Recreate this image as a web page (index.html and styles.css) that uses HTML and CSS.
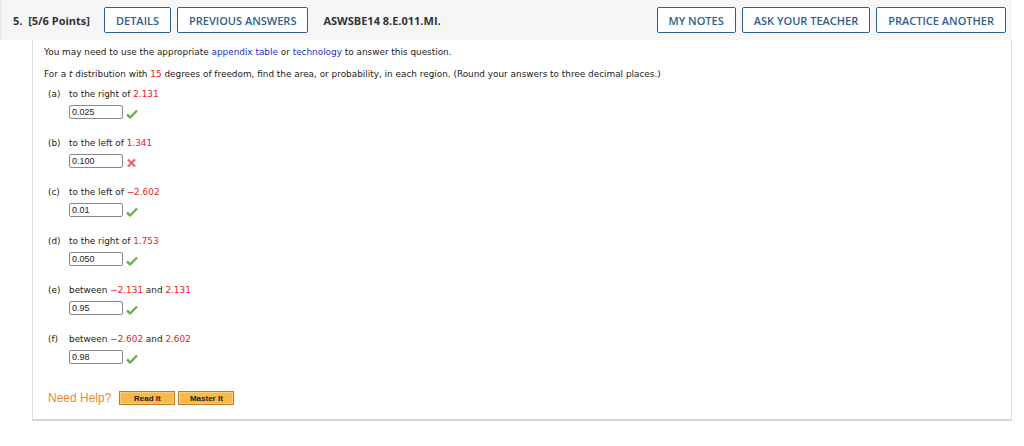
FILE: index.html
```html
<!DOCTYPE html>
<html>
<head>
<meta charset="utf-8">
<link rel="stylesheet" href="styles.css">
</head>
<body>
<div class="question">
  <div class="header">
    <span class="qnum">5.&nbsp; [5/6 Points]</span>
    <span class="btn">DETAILS</span>
    <span class="btn">PREVIOUS ANSWERS</span>
    <span class="qid">ASWSBE14 8.E.011.MI.</span>
    <span class="spacer"></span>
    <span class="btn">MY NOTES</span>
    <span class="btn">ASK YOUR TEACHER</span>
    <span class="btn">PRACTICE ANOTHER</span>
  </div>
  <div class="body">
    <p class="intro">You may need to use the appropriate <a class="lnk">appendix table</a> or <a class="lnk">technology</a> to answer this question.</p>
    <p class="intro2">For a <i>t</i> distribution with <span class="red">15</span> degrees of freedom, find the area, or probability, in each region. (Round your answers to three decimal places.)</p>
    <div class="part">
      <div class="plabel"><span class="pl">(a)</span>to the right of <span class="red">2.131</span></div>
      <div class="ans"><span class="box">0.025</span><svg class="mark" width="12" height="10" viewBox="0 0 12 10"><path d="M1 5.5 L4.2 8.5 L11 1.5" fill="none" stroke="#6fae4f" stroke-width="2.4" stroke-linejoin="round"/></svg></div>
    </div>
    <div class="part">
      <div class="plabel"><span class="pl">(b)</span>to the left of <span class="red">1.341</span></div>
      <div class="ans"><span class="box">0.100</span><svg class="mark" width="12" height="10" viewBox="0 0 12 10"><path d="M2 1.5 L9 8.5 M9 1.5 L2 8.5" fill="none" stroke="#e26a6a" stroke-width="2.4"/></svg></div>
    </div>
    <div class="part">
      <div class="plabel"><span class="pl">(c)</span>to the left of <span class="red">&minus;2.602</span></div>
      <div class="ans"><span class="box">0.01</span><svg class="mark" width="12" height="10" viewBox="0 0 12 10"><path d="M1 5.5 L4.2 8.5 L11 1.5" fill="none" stroke="#6fae4f" stroke-width="2.4" stroke-linejoin="round"/></svg></div>
    </div>
    <div class="part">
      <div class="plabel"><span class="pl">(d)</span>to the right of <span class="red">1.753</span></div>
      <div class="ans"><span class="box">0.050</span><svg class="mark" width="12" height="10" viewBox="0 0 12 10"><path d="M1 5.5 L4.2 8.5 L11 1.5" fill="none" stroke="#6fae4f" stroke-width="2.4" stroke-linejoin="round"/></svg></div>
    </div>
    <div class="part">
      <div class="plabel"><span class="pl">(e)</span>between <span class="red">&minus;2.131</span> and <span class="red">2.131</span></div>
      <div class="ans"><span class="box">0.95</span><svg class="mark" width="12" height="10" viewBox="0 0 12 10"><path d="M1 5.5 L4.2 8.5 L11 1.5" fill="none" stroke="#6fae4f" stroke-width="2.4" stroke-linejoin="round"/></svg></div>
    </div>
    <div class="part">
      <div class="plabel"><span class="pl">(f)</span>between <span class="red">&minus;2.602</span> and <span class="red">2.602</span></div>
      <div class="ans"><span class="box">0.98</span><svg class="mark" width="12" height="10" viewBox="0 0 12 10"><path d="M1 5.5 L4.2 8.5 L11 1.5" fill="none" stroke="#6fae4f" stroke-width="2.4" stroke-linejoin="round"/></svg></div>
    </div>
    <div class="help">
      <span class="needhelp">Need Help?</span>
      <span class="hbtn">Read It</span>
      <span class="hbtn">Master It</span>
    </div>
  </div>
</div>
</body>
</html>
```

FILE: styles.css
```css
html, body {
  margin: 0;
  padding: 0;
  background: #ffffff;
}
.question {
  width: 1012px;
  font-family: "DejaVu Sans", Verdana, sans-serif;
}
.header {
  height: 40px;
  background: #f6f6f6;
  border-left: 2px solid #ececec;
  box-sizing: border-box;
  display: flex;
  align-items: center;
  padding-left: 11px;
  padding-right: 6px;
  font-family: "Open Sans", sans-serif;
}
.qnum {
  font-size: 11px;
  font-weight: 700;
  color: #333;
  margin-right: 14px;
}
.btn {
  height: 26px;
  box-sizing: border-box;
  border: 1px solid #2e5f8e;
  border-radius: 2px;
  background: #fff;
  color: #2e5f8e;
  font-size: 11px;
  font-weight: 600;
  display: flex;
  align-items: center;
  padding: 0 11px;
  margin-right: 6px;
}
.qid {
  font-size: 11px;
  font-weight: 700;
  color: #333;
  margin-left: 9px;
}
.spacer { flex: 1; }
.header .btn:last-child { margin-right: 0; }
.body {
  margin-left: 32px;
  border-left: 1px solid #dcdcdc;
  border-right: 1px solid #dcdcdc;
  border-bottom: 2px solid #d6d6d6;
  height: 381px;
  box-sizing: border-box;
  padding: 5px 0 0 11px;
  font-size: 8.9px;
  color: #222;
}
p { margin: 0; }
.intro { line-height: 14px; }
.intro2 { line-height: 14px; margin-top: 8px; }
.lnk { color: #1a2fc9; text-decoration: none; }
.red { color: #e8201c; }
.part { margin-left: 4px; }
.part:first-of-type { margin-top: 6px; }
.plabel { line-height: 14px; height: 14px; }
.pl { display: inline-block; width: 21px; }
.part + .part { margin-top: 16px; }
.ans {
  display: flex;
  align-items: center;
  margin-left: 21px;
  margin-top: 3px;
  height: 16px;
}
.box {
  width: 54px;
  height: 14px;
  box-sizing: border-box;
  border: 1px solid #8a8a8a;
  border-radius: 2px;
  font-family: "Liberation Sans", Arial, sans-serif;
  font-size: 9px;
  line-height: 12px;
  padding-left: 2px;
  color: #222;
}
.mark { margin-left: 3px; margin-top: 3px; }
.help {
  display: flex;
  align-items: center;
  margin-top: 26px;
  margin-left: 4px;
}
.needhelp {
  font-family: "Liberation Sans", Arial, sans-serif;
  font-size: 12px;
  color: #e68a2e;
  margin-right: 8px;
}
.hbtn {
  width: 56px;
  height: 14px;
  box-sizing: border-box;
  background: #f5b94c;
  border: 1px solid #c07a2a;
  box-shadow: inset 0 0 0 1px #f9d07a;
  font-family: "Liberation Sans", Arial, sans-serif;
  font-size: 8px;
  font-weight: 700;
  color: #222;
  display: flex;
  align-items: center;
  justify-content: center;
  margin-right: 3px;
}
```
